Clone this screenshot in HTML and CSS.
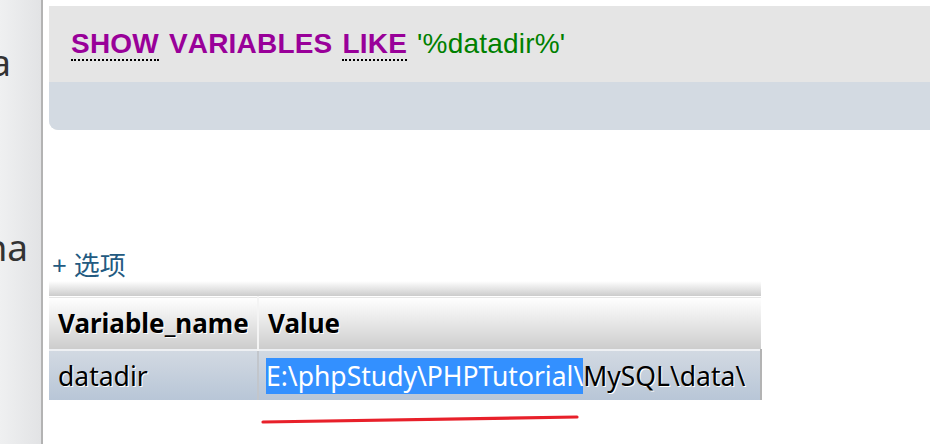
FILE: index.html
```html
<!DOCTYPE html>
<html lang="zh">
  <head>
    <meta charset="utf-8" />
    <title>phpMyAdmin - SQL</title>
    <link rel="stylesheet" href="styles.css">
  </head>
  <body>
    <div class="sidebar">
      <div class="nav-item first">a</div>
      <div class="nav-item second">na</div>
    </div>

    <div class="main">
      <div class="sqlbox">
        <div class="sql-query">
          <abbr class="kw doc">SHOW</abbr>
          <span class="kw">VARIABLES</span>
          <abbr class="kw doc">LIKE</abbr>
          <span class="str">'%datadir%'</span>
        </div>
        <div class="sql-tools"></div>
      </div>

      <div class="options">
        <a href="#">+ 选项</a>
      </div>

      <table class="data">
        <thead>
          <tr class="topbar">
            <th colspan="2"></th>
          </tr>
          <tr class="head">
            <th class="col-name">Variable_name</th>
            <th class="col-value">Value</th>
          </tr>
        </thead>
        <tbody>
          <tr class="odd">
            <td class="col-name">datadir</td>
            <td class="col-value"><span class="selected">E:\phpStudy\PHPTutorial\</span>MySQL\data\</td>
          </tr>
        </tbody>
      </table>

      <svg class="mark" width="330" height="14" viewBox="0 0 330 14">
        <line x1="4" y1="10" x2="318" y2="5" stroke="#e8202a" stroke-width="3.2" stroke-linecap="round" />
      </svg>
    </div>
  </body>
</html>
```

FILE: styles.css
```css
html,
body {
  margin: 0;
  height: 100%;
  overflow: hidden;
  background-color: #fff;
}

body {
  display: flex;
  font-family: "Noto Sans", "Noto Sans CJK SC", sans-serif;
}

.sidebar {
  width: 41px;
  flex-shrink: 0;
  border-right: 2px solid #b3b3b3;
  background: linear-gradient(to right, #eff0f1, #e2e3e5);
  overflow: hidden;
  color: #333;
  font-size: 37px;
}

.nav-item {
  white-space: nowrap;
  direction: rtl;
  line-height: 40px;
}

.nav-item.first {
  margin-top: 42px;
  margin-right: 30px;
}

.nav-item.second {
  margin-top: 145px;
  margin-right: 13px;
}

.main {
  flex: 1;
  min-width: 0;
  padding: 6px 0 0 6px;
  overflow: hidden;
}

.sqlbox {
  width: 940px;
  background-color: #e5e5e5;
  border-bottom-left-radius: 9px;
  overflow: hidden;
}

.sql-query {
  height: 76px;
  padding-left: 22px;
  box-sizing: border-box;
  padding-top: 19px;
  font-family: "Liberation Sans", Arial, sans-serif;
  font-size: 28px;
  line-height: 38px;
  white-space: nowrap;
  font-kerning: none;
  word-spacing: 2px;
  letter-spacing: 0.2px;
}

.kw {
  color: #990099;
  font-weight: bold;
}

abbr.doc {
  text-decoration: none;
  border-bottom: 2px dotted #000;
  padding-bottom: 0;
}

.str {
  color: #008000;
}

.sql-tools {
  height: 48px;
  background-color: #d3dae2;
}

.options {
  margin-top: 119px;
  padding-left: 3px;
  font-size: 26px;
  line-height: 32px;
}

.options a {
  color: #235a81;
  text-decoration: none;
}

table.data {
  margin-top: 0;
  border-collapse: collapse;
  width: 713px;
  color: #000;
  text-shadow: 1px 1px 0 #fff;
}

.topbar th {
  height: 15px;
  padding: 0;
  background: linear-gradient(#ffffff, #cccccc);
}

.head th {
  height: 52px;
  padding: 0 0 0 9px;
  text-align: left;
  font-size: 26px;
  font-weight: bold;
  background: linear-gradient(#ffffff, #cccccc);
  border-top: 1px solid #ffffff;
}

.head th.col-name {
  border-right: 2px solid #f4f4f4;
}

tbody td {
  height: 49px;
  padding: 0 0 0 9px;
  font-size: 26.5px;
  background: linear-gradient(#d2d9e2, #b8c6d7);
  border-top: 2px solid #eef0f3;
  white-space: nowrap;
}

tbody td.col-name {
  width: 199px;
  border-right: 2px solid #c2c6cc;
  padding-left: 9px;
}

tbody td.col-value {
  border-right: 2px solid #b3b3b3;
  padding-left: 7px;
}

.selected {
  background-color: #3390ff;
  color: #fff;
  text-shadow: none;
}

.mark {
  display: block;
  margin: 12px 0 0 210px;
}
```
